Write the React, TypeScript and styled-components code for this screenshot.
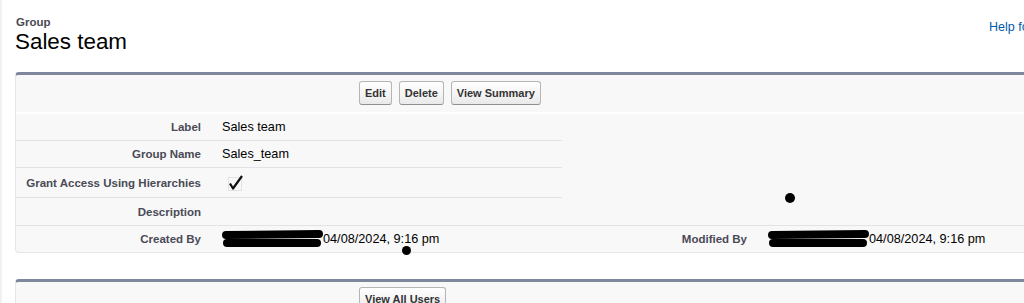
import styled, { createGlobalStyle } from "styled-components";

const GlobalStyle = createGlobalStyle`
  html, body {
    margin: 0;
    background: #fff;
    overflow: hidden;
  }

  body {
    font-family: "Liberation Sans", Arial, Helvetica, sans-serif;
    color: #000;
  }
`;

const colors = {
  label: "#4a4a56",
  panelBg: "#f8f8f8",
  panelBorder: "#e6e6e6",
  panelTop: "#7f879e",
  rowLine: "#e3e3e3",
  link: "#015ba7",
};

const Page = styled.div`
  width: 1200px;
  min-height: 303px;
  border-left: 2px solid #f1f1f1;
  padding: 16px 0 0 13px;
`;

const Header = styled.div`
  display: grid;
  grid-template-columns: 974px auto;
  align-items: start;
  margin-bottom: 17px;
`;

const PageType = styled.div`
  font-size: 11.5px;
  font-weight: bold;
  line-height: 13px;
  color: ${colors.label};
  padding-left: 1px;
`;

const PageTitle = styled.h1`
  margin: 0;
  font-size: 22.4px;
  font-weight: normal;
  line-height: 26px;
  color: #000;
`;

const HelpLink = styled.a`
  margin-top: 4px;
  font-size: 12.5px;
  color: ${colors.link};
  text-decoration: none;
  white-space: nowrap;
`;

const Panel = styled.div<{ $gap?: number }>`
  position: relative;
  width: 1100px;
  margin-top: ${(p) => p.$gap ?? 0}px;
  background: ${colors.panelBg};
  border: 1px solid ${colors.panelBorder};
  border-top: 3px solid ${colors.panelTop};
  border-radius: 4px;
`;

const ButtonRow = styled.div<{ $top: number }>`
  display: flex;
  gap: 7px;
  padding: ${(p) => p.$top}px 0 7px 343px;
  border-bottom: 2px solid #fff;
`;

const Button = styled.button`
  height: 24px;
  padding: 0 5px;
  font-family: inherit;
  font-size: 11px;
  font-weight: bold;
  color: #333;
  background: linear-gradient(#ffffff, #f3f3f3 60%, #e9e9e9);
  border: 1px solid #b5b5b5;
  border-bottom-color: #8f8f8f;
  border-radius: 3px;
`;

const DetailRow = styled.div<{ $h: number }>`
  display: grid;
  grid-template-columns: 196px 350px 196px 1fr;
  height: ${(p) => p.$h}px;
`;

const Cell = styled.div<{ $line?: boolean }>`
  display: flex;
  align-items: center;
  border-bottom: 1px solid ${(p) => (p.$line ? colors.rowLine : "transparent")};
`;

const LabelCell = styled(Cell)`
  justify-content: flex-end;
  padding-right: 11px;
  font-size: 11.5px;
  font-weight: bold;
  color: ${colors.label};
`;

const DataCell = styled(Cell)`
  padding-left: 10px;
  font-size: 12.7px;
  color: #000;
`;

const Redacted = styled.svg`
  display: block;
  flex-shrink: 0;
`;

const Dot = styled.span<{ $x: number; $y: number; $size: number }>`
  position: absolute;
  left: ${(p) => p.$x}px;
  top: ${(p) => p.$y}px;
  width: ${(p) => p.$size}px;
  height: ${(p) => p.$size}px;
  border-radius: 50%;
  background: #000;
`;

const Scribble = ({ width }: { width: number }) => (
  <Redacted width={width} height={20} viewBox={`0 0 ${width} 20`}>
    <path
      d={`M4 6 L${width - 4} 5`}
      stroke="#000"
      strokeWidth={8}
      strokeLinecap="round"
    />
    <path
      d={`M5 14 L${width - 6} 14`}
      stroke="#000"
      strokeWidth={8}
      strokeLinecap="round"
    />
  </Redacted>
);

const Checked = () => (
  <svg width={21} height={16} viewBox="0 0 21 16">
    <rect x={6.5} y={2.5} width={13} height={13} fill="none" stroke="#e2e2e2" />
    <path
      d="M8 8.5 L11 13.5 L20 1"
      fill="none"
      stroke="#111"
      strokeWidth={2.2}
      strokeLinejoin="round"
    />
  </svg>
);

const Audit = ({ stamp }: { stamp: string }) => (
  <>
    <Scribble width={101} />
    {stamp}
  </>
);

export default function App() {
  return (
    <>
      <GlobalStyle />
      <Page>
        <Header>
          <div>
            <PageType>Group</PageType>
            <PageTitle>Sales team</PageTitle>
          </div>
          <HelpLink href="#">Help for this Page</HelpLink>
        </Header>

        <Panel>
          <ButtonRow $top={6}>
            <Button>Edit</Button>
            <Button>Delete</Button>
            <Button>View Summary</Button>
          </ButtonRow>

          <DetailRow $h={27}>
            <LabelCell $line>Label</LabelCell>
            <DataCell $line>Sales team</DataCell>
            <LabelCell />
            <DataCell />
          </DetailRow>
          <DetailRow $h={27}>
            <LabelCell $line>Group Name</LabelCell>
            <DataCell $line>Sales_team</DataCell>
            <LabelCell />
            <DataCell />
          </DetailRow>
          <DetailRow $h={30}>
            <LabelCell $line>Grant Access Using Hierarchies</LabelCell>
            <DataCell $line>
              <Checked />
            </DataCell>
            <LabelCell />
            <DataCell />
          </DetailRow>
          <DetailRow $h={28}>
            <LabelCell $line>Description</LabelCell>
            <DataCell $line />
            <LabelCell $line />
            <DataCell $line />
          </DetailRow>
          <DetailRow $h={26}>
            <LabelCell>Created By</LabelCell>
            <DataCell>
              <Audit stamp="04/08/2024, 9:16 pm" />
            </DataCell>
            <LabelCell>Modified By</LabelCell>
            <DataCell>
              <Audit stamp="04/08/2024, 9:16 pm" />
            </DataCell>
          </DetailRow>

          <Dot $x={769} $y={118} $size={10} />
          <Dot $x={386} $y={171} $size={9} />
        </Panel>

        <Panel $gap={26}>
          <ButtonRow $top={5}>
            <Button>View All Users</Button>
          </ButtonRow>
        </Panel>
      </Page>
    </>
  );
}
